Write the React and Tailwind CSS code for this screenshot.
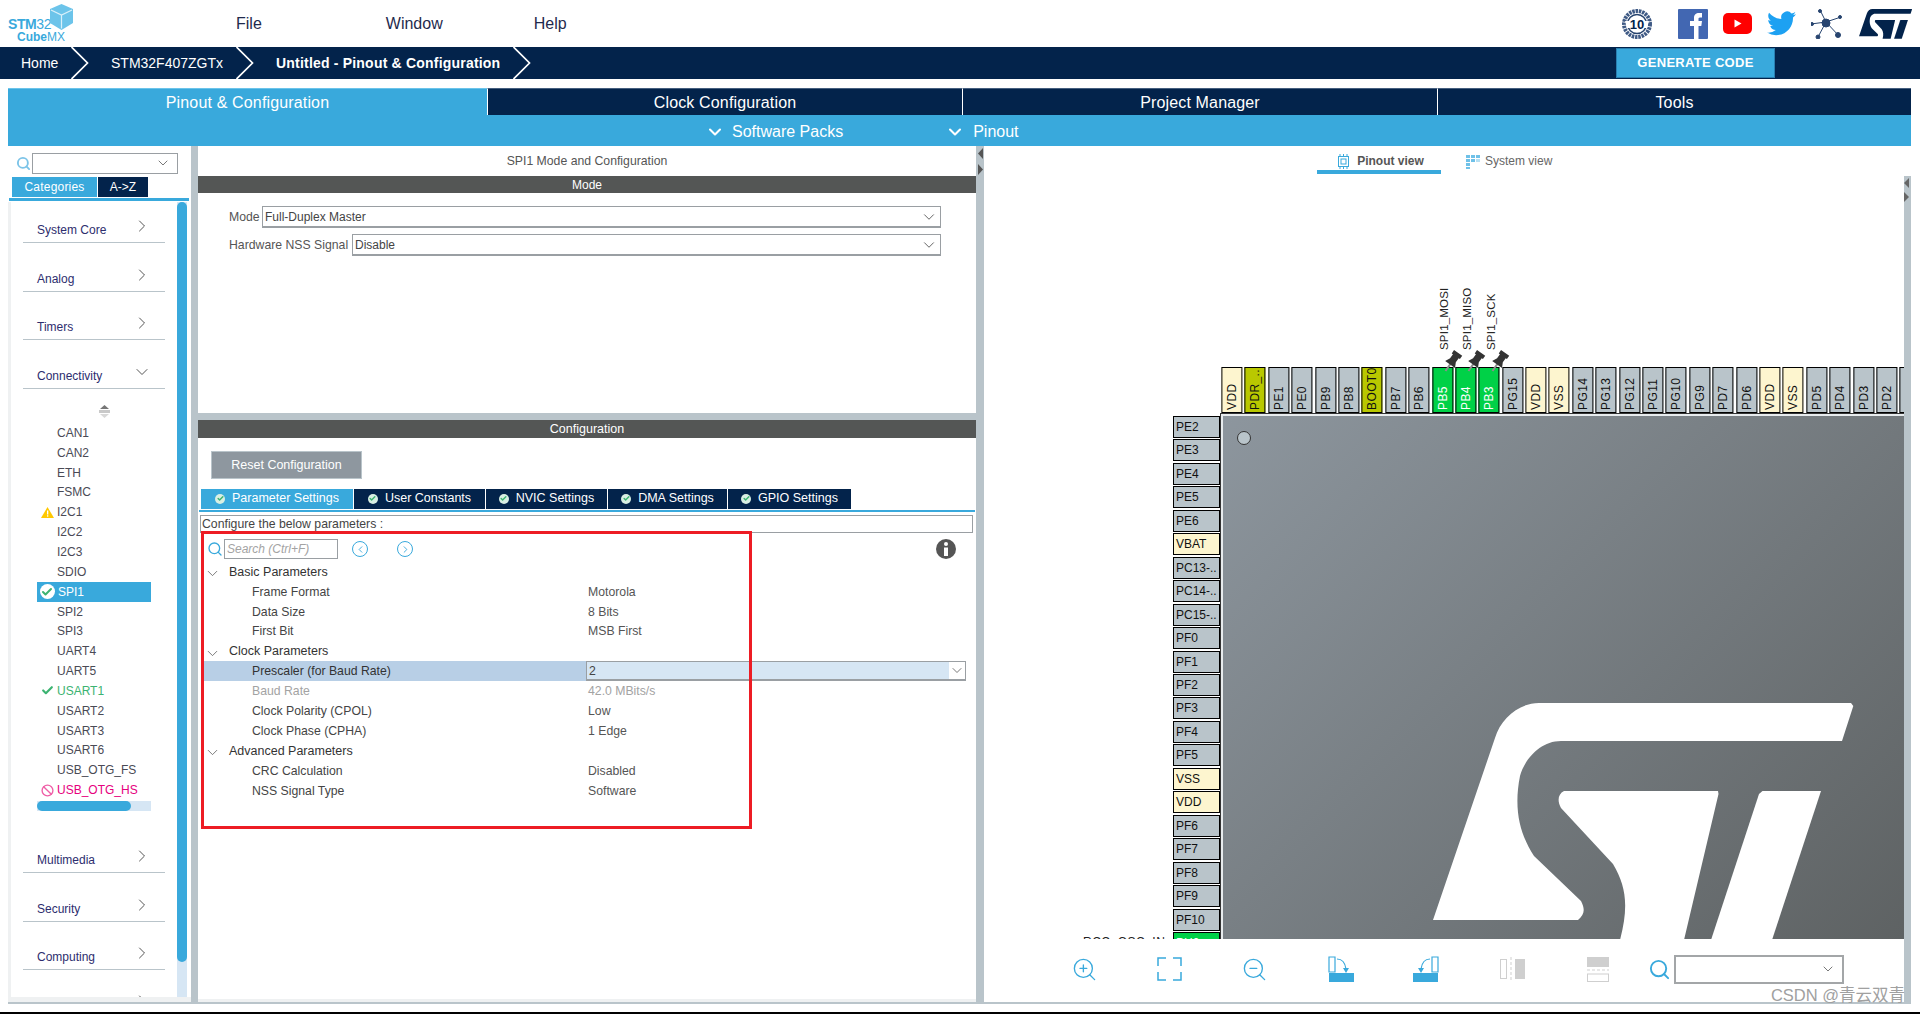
import { ChevronDown, ChevronLeft, ChevronRight, Check, Ban, Search, ZoomIn, ZoomOut } from "lucide-react";

const connectivity = [
    { name: "CAN1" }, { name: "CAN2" }, { name: "ETH" }, { name: "FSMC" },
    { name: "I2C1", state: "warn" }, { name: "I2C2" }, { name: "I2C3" }, { name: "SDIO" },
    { name: "SPI1", state: "selected" }, { name: "SPI2" }, { name: "SPI3" }, { name: "UART4" },
    { name: "UART5" }, { name: "USART1", state: "ok" }, { name: "USART2" }, { name: "USART3" },
    { name: "USART6" }, { name: "USB_OTG_FS" }, { name: "USB_OTG_HS", state: "blocked" },
];

const topPins = [
    ["VDD", "y"], ["PDR_..", "o"], ["PE1", "g"], ["PE0", "g"], ["PB9", "g"], ["PB8", "g"], ["BOOT0", "o"],
    ["PB7", "g"], ["PB6", "g"], ["PB5", "a"], ["PB4", "a"], ["PB3", "a"], ["PG15", "g"], ["VDD", "y"],
    ["VSS", "y"], ["PG14", "g"], ["PG13", "g"], ["PG12", "g"], ["PG11", "g"], ["PG10", "g"], ["PG9", "g"],
    ["PD7", "g"], ["PD6", "g"], ["VDD", "y"], ["VSS", "y"], ["PD5", "g"], ["PD4", "g"], ["PD3", "g"], ["PD2", "g"], ["", "g"],
];

const leftPins = [
    ["PE2", "g"], ["PE3", "g"], ["PE4", "g"], ["PE5", "g"], ["PE6", "g"], ["VBAT", "y"], ["PC13-..", "g"],
    ["PC14-..", "g"], ["PC15-..", "g"], ["PF0", "g"], ["PF1", "g"], ["PF2", "g"], ["PF3", "g"], ["PF4", "g"],
    ["PF5", "g"], ["VSS", "y"], ["VDD", "y"], ["PF6", "g"], ["PF7", "g"], ["PF8", "g"], ["PF9", "g"], ["PF10", "g"], ["PH0", "a"],
];

const pinColors = {
    g: "bg-[#b9c4ca] text-[#111]",
    y: "bg-[#fdf5cf] text-[#111]",
    o: "bg-[#b9c800] text-[#111]",
    a: "bg-[#00d147] text-white",
};

const parameters = [
    { group: "Basic Parameters" },
    { label: "Frame Format", value: "Motorola" },
    { label: "Data Size", value: "8 Bits" },
    { label: "First Bit", value: "MSB First" },
    { group: "Clock Parameters" },
    { label: "Prescaler (for Baud Rate)", value: "2", active: true },
    { label: "Baud Rate", value: "42.0 MBits/s", muted: true },
    { label: "Clock Polarity (CPOL)", value: "Low" },
    { label: "Clock Phase (CPHA)", value: "1 Edge" },
    { group: "Advanced Parameters" },
    { label: "CRC Calculation", value: "Disabled" },
    { label: "NSS Signal Type", value: "Software" },
];

function StLogoPaths() {
    return (
        <>
            <path d="M1538 702L1850 702L1852.3 705L1841 740L1560 740C1538 740 1523 760 1519 775C1512 810 1520 835 1533 855L1580 900C1584 908 1584 913 1577 919L1432 919L1494 737C1500 717 1518 702 1538 702Z" />
            <path d="M1563 790L1717 790L1717.5 793L1683 939L1619 939C1628 905 1625 885 1612 863L1560 807C1556 800 1557 793 1563 790Z" />
            <path d="M1761.5 790L1820 790L1771 939L1710 939L1758 793Z" />
        </>
    );
}

function Crumb({ bold, className, children }) {
    return (
        <div className={`flex h-full items-center justify-between ${className}`}>
            <span className={`text-[14px] text-white whitespace-nowrap ${bold ? "font-bold tracking-[0.2px]" : ""}`}>{children}</span>
            <svg width="18" height="32" viewBox="0 0 18 32" fill="none" className="shrink-0">
                <path d="M0.5 0L16.5 16L0.5 32" stroke="white" strokeWidth="1.7" />
            </svg>
        </div>
    );
}

function Category({ name, open, className }) {
    return (
        <div className={`relative ml-[12px] w-[142px] h-[25px] border-b border-[#b9c4ca] ${className}`}>
            <span className="absolute left-[14px] top-[3px] text-[12px] text-[#2d2d6e]">{name}</span>
            {open
                ? <ChevronDown size={20} strokeWidth={1.2} className="absolute right-[13px] top-[-2px] text-[#555]" />
                : <ChevronRight size={20} strokeWidth={1.2} className="absolute right-[13px] top-[-2px] text-[#555]" />}
        </div>
    );
}

function ConnectivityRow({ name, state }) {
    const selected = state === "selected";
    let color = "text-[#4a4a55]";
    if (selected) color = "text-white";
    if (state === "ok") color = "text-[#3cb371]";
    if (state === "blocked") color = "text-[#e6007e]";
    return (
        <div className={`flex h-[19.85px] w-[114px] items-center ${selected ? "bg-[#39a9dc]" : ""}`}>
            <div className="flex w-[20px] justify-center">
                {state === "warn" && (
                    <svg width="13" height="11" viewBox="0 0 13 11"><path d="M6.5 0L13 11H0Z" fill="#ffc800" /><rect x="6" y="3.5" width="1.3" height="4" fill="#fff" /><rect x="6" y="8.3" width="1.3" height="1.3" fill="#fff" /></svg>
                )}
                {selected && (
                    <span className="flex h-[15px] w-[15px] items-center justify-center rounded-full bg-white">
                        <Check size={12} strokeWidth={4} className="text-[#3cb371]" />
                    </span>
                )}
                {state === "ok" && <Check size={13} strokeWidth={4} className="text-[#3cb371]" />}
                {state === "blocked" && <Ban size={13} strokeWidth={2.5} className="text-[#ef5fa7]" />}
            </div>
            <span className={`text-[12px] leading-none whitespace-nowrap ${color} ${selected ? "pl-[1px]" : ""}`}>{name}</span>
        </div>
    );
}

function LeftPanel() {
    return (
        <div className="flex h-full w-[183px] shrink-0 flex-col">
            <div className="flex h-[31px] items-center pl-[8px] pt-[3px]">
                <Search size={15} strokeWidth={3} className="text-[#7cc4e8]" />
                <div className="ml-[1px] flex h-[21px] w-[146px] items-center justify-end border border-[#9a9fa3] pr-[6px]">
                    <ChevronDown size={16} strokeWidth={1.2} className="text-[#555]" />
                </div>
            </div>
            <div className="flex pl-[4px] h-[20px]">
                <div className="flex w-[85px] items-center justify-center bg-[#39a9dc] text-[12px] tracking-[0.2px] text-white">Categories</div>
                <div className="ml-[1px] flex w-[50px] items-center justify-center bg-[#03234b] text-[12px] text-white">A-&gt;Z</div>
            </div>
            <div className="mt-[1px] ml-[1px] mr-[2px] h-[3px] bg-[#39a9dc]"></div>
            <div className="mt-[1px] flex min-h-0 flex-1 border-l-[3px] border-b-[5px] border-[#eff1f2]">
                <div className="w-[166px] overflow-hidden">
                    <Category name="System Core" className="mt-[16px]" />
                    <Category name="Analog" className="mt-[24px]" />
                    <Category name="Timers" className="mt-[23px]" />
                    <Category name="Connectivity" open className="mt-[24px]" />
                    <div className="mt-[16px] pl-[88px]">
                        <svg width="11" height="13" viewBox="0 0 11 13" className="block">
                            <path d="M5.5 0L10 4H1Z" fill="#777" />
                            <rect x="0" y="5" width="11" height="3" fill="#c9c9c9" />
                            <path d="M1 9H10L5.5 13Z" fill="#d8d8d8" />
                        </svg>
                    </div>
                    <div className="ml-[26px] mt-[5px]">
                        {connectivity.map((item) => <ConnectivityRow key={item.name} {...item} />)}
                        <div className="mt-[1px] h-[10px] w-[114px] bg-[#d6e6f4]">
                            <div className="h-full w-[94px] rounded-full bg-[#39a9dc]"></div>
                        </div>
                    </div>
                    <Category name="Multimedia" className="mt-[37px]" />
                    <Category name="Security" className="mt-[24px]" />
                    <Category name="Computing" className="mt-[23px]" />
                    <Category name="" className="mt-[23px]" />
                </div>
                <div className="h-full w-[10px] bg-[#d6e6f4]">
                    <div className="h-[760px] w-full rounded-full bg-[#39a9dc]"></div>
                </div>
            </div>
        </div>
    );
}

function SelectBox({ value, className }) {
    return (
        <div className={`flex shrink-0 items-center justify-between border border-[#9a9fa3] border-b-2 pl-[2px] pr-[2px] text-[12px] text-[#444] ${className}`}>
            <span>{value}</span>
            <ChevronDown size={18} strokeWidth={1.2} className="text-[#555]" />
        </div>
    );
}

function TabDot() {
    return (
        <span className="mr-[7px] flex h-[10px] w-[10px] items-center justify-center rounded-full bg-[#d9efe3]">
            <Check size={7} strokeWidth={5} className="text-[#3cb371]" />
        </span>
    );
}

function ConfigTab({ active, className, children }) {
    return (
        <div className={`flex h-[20px] items-center justify-center pb-[1px] text-[12.5px] whitespace-nowrap text-white ${active ? "bg-[#39a9dc]" : "bg-[#03234b]"} ${className}`}>
            <TabDot />
            {children}
        </div>
    );
}

function ParameterRows() {
    return (
        <div className="ml-[5px] mt-[3px]">
            {parameters.map((row) => {
                if (row.group) {
                    return (
                        <div key={row.group} className="flex h-[19.9px] items-center text-[12.5px] text-[#333]">
                            <ChevronDown size={17} strokeWidth={1.2} className="ml-[1px] mt-[3px] w-[17px] text-[#666]" />
                            <span className="ml-[8px]">{row.group}</span>
                        </div>
                    );
                }
                return (
                    <div key={row.label} className="flex h-[19.9px] items-center text-[12.25px]">
                        <div className={`flex h-full w-[383px] items-center pl-[49px] ${row.active ? "bg-[#b8cfe6] text-[#333]" : row.muted ? "text-[#a3a3a3]" : "text-[#444]"}`}>{row.label}</div>
                        {row.active ? (
                            <div className="flex h-full w-[380px] border border-[#9a9fa3] border-b-2 bg-[#d6e6f4] pl-[2px] text-[#444]">
                                <span className="flex-1">{row.value}</span>
                                <span className="flex w-[16px] items-center justify-center bg-white">
                                    <ChevronDown size={17} strokeWidth={1.2} className="text-[#555]" />
                                </span>
                            </div>
                        ) : (
                            <span className={`pl-[2px] ${row.muted ? "text-[#a3a3a3]" : "text-[#555]"}`}>{row.value}</span>
                        )}
                    </div>
                );
            })}
        </div>
    );
}

function CenterPanel() {
    return (
        <div className="flex h-full w-[778px] shrink-0 flex-col">
            <div className="h-[267px] shrink-0">
                <div className="flex h-[30px] items-center justify-center text-[12.25px] text-[#555]">SPI1 Mode and Configuration</div>
                <div className="flex h-[17px] items-center justify-center bg-[#545655] text-[12px] text-white">Mode</div>
                <div className="ml-[31px] mt-[13px] flex items-center">
                    <span className="w-[33px] whitespace-nowrap text-[12.25px] text-[#555]">Mode</span>
                    <SelectBox value="Full-Duplex Master" className="h-[22px] w-[679px]" />
                </div>
                <div className="ml-[31px] mt-[6px] flex items-center">
                    <span className="w-[123px] whitespace-nowrap text-[12.25px] text-[#555]">Hardware NSS Signal</span>
                    <SelectBox value="Disable" className="h-[22px] w-[589px]" />
                </div>
            </div>
            <div className="h-[7px] shrink-0 bg-[#b9c4ca]"></div>
            <div className="relative min-h-0 flex-1 border-b-[3px] border-[#eff1f2]">
                <div className="flex h-[18px] items-center justify-center bg-[#545655] text-[12.5px] text-white">Configuration</div>
                <div className="ml-[13px] mt-[13px] flex h-[28px] w-[151px] items-center justify-center border border-[#b9c4ca] bg-[#8e979f] text-[12.5px] text-white">Reset Configuration</div>
                <div className="ml-[3px] mt-[10px] flex gap-[1px]">
                    <ConfigTab active className="w-[152px]">Parameter Settings</ConfigTab>
                    <ConfigTab className="w-[131px]">User Constants</ConfigTab>
                    <ConfigTab className="w-[121px]">NVIC Settings</ConfigTab>
                    <ConfigTab className="w-[119px]">DMA Settings</ConfigTab>
                    <ConfigTab className="w-[123px]">GPIO Settings</ConfigTab>
                </div>
                <div className="ml-[1px] mr-[1px] mt-[1px] h-[2px] bg-[#39a9dc]"></div>
                <div className="ml-[2px] mr-[3px] mt-[3px] flex h-[18px] items-center border border-[#9a9fa3] pl-[1px] text-[12.25px] text-[#444]">Configure the below parameters :</div>
                <div className="ml-[9px] mt-[6px] flex h-[20px] items-center">
                    <Search size={16} strokeWidth={2} className="text-[#39a9dc]" />
                    <div className="ml-[1px] flex h-[20px] w-[114px] items-center border border-[#9a9fa3] pl-[2px] text-[12px] italic text-[#a3a3a3]">Search (Ctrl+F)</div>
                    <span className="ml-[14px] flex h-[16px] w-[16px] items-center justify-center rounded-full border border-[#39a9dc]">
                        <ChevronLeft size={11} strokeWidth={2} className="text-[#39a9dc]" />
                    </span>
                    <span className="ml-[29px] flex h-[16px] w-[16px] items-center justify-center rounded-full border border-[#39a9dc]">
                        <ChevronRight size={11} strokeWidth={2} className="text-[#39a9dc]" />
                    </span>
                    <svg width="20" height="20" viewBox="0 0 20 20" className="ml-auto mr-[20px]">
                        <circle cx="10" cy="10" r="10" fill="#555" />
                        <circle cx="10" cy="5" r="2" fill="#fff" />
                        <rect x="8" y="8.5" width="4" height="8.5" fill="#fff" />
                    </svg>
                </div>
                <ParameterRows />
                {/* red box drawn over the parameter tree */}
                <div className="absolute left-[3px] top-[111px] h-[298px] w-[551px] border-[3px] border-[#ed1c24]"></div>
            </div>
        </div>
    );
}

function Pushpin() {
    return (
        <svg width="22" height="24" viewBox="0 0 22 24" className="block">
            <g transform="translate(1.500 23) rotate(35)">
                <path d="M0 0V-9" stroke="#8c8c8c" strokeWidth="2" />
                <path d="M-6 -8H6L3.500 -13V-18H5V-22H-5V-18H-3.500V-13Z" fill="#333" />
            </g>
        </svg>
    );
}

function ToolIcon({ children }) {
    return <svg width="27" height="26" viewBox="0 0 27 26" fill="none" className="shrink-0">{children}</svg>;
}

function Toolbar() {
    return (
        <div className="flex h-[64px] shrink-0 items-center pb-[2px] pl-[87px]">
            <ZoomIn size={27} strokeWidth={1.2} className="text-[#39a9dc]" />
            <div className="ml-[58px]">
                <ToolIcon><path d="M2 10V2H10M17 2H25V10M25 16V24H17M10 24H2V16" stroke="#39a9dc" strokeWidth="1.5" /></ToolIcon>
            </div>
            <ZoomOut size={27} strokeWidth={1.2} className="ml-[58px] text-[#39a9dc]" />
            <div className="ml-[60px]">
                <ToolIcon>
                    <path d="M1 1H7V16H1ZM9 3C14 3 17 6 18 13" stroke="#39a9dc" strokeWidth="1.2" />
                    <path d="M15 12H21L18 17Z" fill="#39a9dc" />
                    <rect x="1" y="17" width="25" height="9" fill="#39a9dc" />
                </ToolIcon>
            </div>
            <div className="ml-[57px]">
                <ToolIcon>
                    <path d="M26 1H20V16H26ZM18 3C13 3 10 6 9 13" stroke="#39a9dc" strokeWidth="1.2" />
                    <path d="M6 12H12L9 17Z" fill="#39a9dc" />
                    <rect x="1" y="17" width="25" height="9" fill="#39a9dc" />
                </ToolIcon>
            </div>
            <div className="ml-[60px]">
                <ToolIcon>
                    <rect x="1.500" y="3.500" width="6" height="19" stroke="#cfcfcf" />
                    <rect x="16" y="3" width="10" height="20" fill="#cfcfcf" />
                    <path d="M12 1V25" stroke="#cfcfcf" strokeDasharray="3 2" />
                </ToolIcon>
            </div>
            <div className="ml-[59px]">
                <ToolIcon>
                    <rect x="2" y="1" width="22" height="10" fill="#cfcfcf" />
                    <path d="M2 14H24" stroke="#cfcfcf" strokeDasharray="3 2" />
                    <rect x="2.500" y="18" width="21" height="7.500" stroke="#cfcfcf" />
                </ToolIcon>
            </div>
            <Search size={23} strokeWidth={2} className="ml-[36px] text-[#39a9dc]" />
            <div className="ml-[3px] flex h-[29px] w-[170px] items-center justify-end border-2 border-[#a3a6a8] pr-[6px]">
                <ChevronDown size={16} strokeWidth={1.2} className="text-[#555]" />
            </div>
        </div>
    );
}

function PinoutPanel() {
    return (
        <div className="relative flex h-full min-w-0 flex-1 flex-col">
            <div className="flex h-[30px] shrink-0 pl-[333px]">
                <div className="flex h-[28px] w-[124px] items-center justify-center gap-[7px] border-b-4 border-[#39a9dc] pl-[3px] pt-[6px] text-[12px] font-bold text-[#555]">
                    <svg width="13" height="15" viewBox="0 0 13 15" fill="none" stroke="#39a9dc"><rect x="1.500" y="2.500" width="10" height="10" /><rect x="4" y="5" width="5" height="5" /><path d="M3 0V2M6.500 0V2M10 0V2M3 13V15M6.500 13V15M10 13V15" /></svg>
                    Pinout view
                </div>
                <div className="ml-[25px] flex h-[30px] items-center gap-[5px] text-[12px] text-[#666]">
                    <svg width="14" height="15" viewBox="0 0 14 15" fill="#6fc1e8"><rect x="0" y="1" width="4" height="3" /><rect x="5" y="1" width="4" height="3" /><rect x="10" y="1" width="4" height="3" /><rect x="0" y="5" width="4" height="3" /><rect x="5" y="5" width="4" height="3" /><rect x="10" y="5" width="4" height="3" opacity="0.5" /><rect x="0" y="9" width="4" height="3" /><rect x="0" y="13" width="4" height="2" /></svg>
                    System view
                </div>
            </div>
            <div className="flex min-h-0 flex-1">
                <div className="relative h-[763px] min-w-0 flex-1 overflow-hidden">
                    {/* assigned signal labels and pins sit on the free chip canvas */}
                    {[["SPI1_MOSI", 461], ["SPI1_MISO", 484], ["SPI1_SCK", 508]].map(([label, left]) => (
                        <div key={label} className="absolute top-[112px] flex h-[62px] w-[14px] rotate-180 items-center justify-start text-[11.5px] leading-none tracking-[0.2px] whitespace-nowrap text-[#222] [writing-mode:vertical-rl]" style={{ left: left - 7 }}>{label}</div>
                    ))}
                    {[452, 475, 499].map((left) => (
                        <div key={left} className="absolute top-[172px] z-10" style={{ left: left + 8 }}><Pushpin /></div>
                    ))}
                    <div className="ml-[237px] flex gap-[2px] pt-[191px]">
                        {topPins.map(([name, kind], i) => (
                            <div key={i} className={`flex h-[46px] w-[21.4px] shrink-0 rotate-180 items-center justify-start border border-black pt-[2px] text-[12px] leading-none tracking-[0.4px] [writing-mode:vertical-rl] ${pinColors[kind]}`}>{name}</div>
                        ))}
                    </div>
                    <div className="flex">
                        <div className="ml-[189px] mt-[3px] flex w-[47px] shrink-0 flex-col gap-[1.46px]">
                            {leftPins.map(([name, kind], i) => (
                                <div key={i} className={`flex h-[22px] shrink-0 items-center border border-black pl-[2px] text-[12px] leading-none ${pinColors[kind]}`}>{name}</div>
                            ))}
                        </div>
                        <div className="relative h-[526px] flex-1 border-l-[1px] border-t-[1px] border-[#333] bg-[linear-gradient(135deg,#8d969e,#5e6263)] shadow-[inset_2px_2px_0_#e8ecee]">
                            <span className="absolute left-[16px] top-[17px] h-[14px] w-[14px] rounded-full border border-[#333] bg-[#b9c4ca]"></span>
                            <svg viewBox="1220 413 684 526" fill="#fff" className="absolute left-0 top-0 h-[526px] w-[684px]"><StLogoPaths /></svg>
                        </div>
                    </div>
                    <span className="absolute left-[99px] top-[760px] text-[12px] leading-none tracking-[0.5px] whitespace-nowrap text-[#222]">RCC_OSC_IN</span>
                </div>
                <div className="relative h-full w-[7px] shrink-0 bg-[#b9c4ca]">
                    <svg width="6" height="24" viewBox="0 0 6 24" className="absolute left-0 top-[2px]">
                        <path d="M5 0V10L0 5Z" fill="#666" />
                        <path d="M0 14V24L5 19Z" fill="#666" />
                    </svg>
                </div>
            </div>
            <div className="absolute bottom-0 left-0 right-[7px]"><Toolbar /></div>
            <span className="absolute right-[6px] bottom-[-6px] text-[16.5px] text-[#a0a0a0] [font-family:'Liberation_Sans','Noto_Sans_CJK_SC',sans-serif]">CSDN @青云双青</span>
        </div>
    );
}

function TopIcons() {
    return (
        <div className="flex items-center pr-[8px]">
            {/* anniversary seal */}
            <svg width="30" height="30" viewBox="0 0 30 30">
                <circle cx="15" cy="15" r="13" fill="#fff" stroke="#3f5a85" strokeWidth="4" strokeDasharray="2.500 0.800" />
                <circle cx="15" cy="15" r="9.500" fill="#fff" stroke="#27446f" strokeWidth="1.500" />
                <path d="M3 12H27L25 19H5Z" fill="#fff" />
                <text x="15" y="20" textAnchor="middle" fontSize="13" fontWeight="700" fill="#03234b" fontFamily="Liberation Sans">10</text>
            </svg>
            <svg width="30" height="30" viewBox="0 0 30 30" className="ml-[26px]">
                <rect width="30" height="30" rx="1" fill="#4267b2" />
                <path d="M16 30V17H12V12H16V9C16 5.500 18 4 21 4H24V8.500H22C20.500 8.500 20.500 9.300 20.500 10.500V12H24L23.300 17H20.500V30Z" fill="#fff" />
            </svg>
            <svg width="29" height="21" viewBox="0 0 29 21" className="ml-[15px]">
                <rect width="29" height="21" rx="5" fill="#ff0000" />
                <path d="M11.500 6.500L18.500 10.500L11.500 14.500Z" fill="#fff" />
            </svg>
            <svg width="29" height="25" viewBox="0 0 24 20" className="ml-[15px]">
                <path d="M24 2.400c-.9.400-1.800.700-2.800.800 1-.600 1.800-1.600 2.200-2.700-1 .600-2 1-3.100 1.200A4.900 4.900 0 0 0 11.900 6.200C7.800 6 4.200 4 1.700 1 .4 3.200 1 6.100 3.200 7.600c-.8 0-1.600-.2-2.200-.6 0 2.400 1.700 4.400 3.900 4.900-.7.200-1.500.2-2.200.1.600 2 2.400 3.400 4.600 3.400A9.900 9.900 0 0 1 0 17.500 14 14 0 0 0 7.500 19.700c9.100 0 14.300-7.700 14-14.600 1-.7 1.800-1.600 2.500-2.700Z" fill="#1da1f2" />
            </svg>
            <svg width="31" height="30" viewBox="0 0 31 30" className="ml-[15px]" stroke="#27446f" strokeWidth="1" fill="#27446f">
                <path d="M15 13L9 1M15 13L30 8M15 13L0 15M15 13L7 28M15 13L28 27" fill="none" />
                <circle cx="15" cy="14" r="4" />
                <circle cx="9" cy="2" r="1.500" />
                <circle cx="29" cy="8" r="1.500" />
                <circle cx="1" cy="15" r="1.500" />
                <circle cx="7" cy="28" r="2" />
                <circle cx="27" cy="26" r="2.500" />
            </svg>
            <svg viewBox="1432 702 420 238" fill="#03234b" className="ml-[17px] h-[30px] w-[53px]"><StLogoPaths /></svg>
        </div>
    );
}

export default function App() {
    return (
        <div className="flex h-[1014px] w-[1920px] flex-col overflow-hidden bg-white [font-family:'Liberation_Sans',Arial,sans-serif]">
            {/* menu bar */}
            <div className="flex h-[47px] shrink-0 items-center">
                <div className="relative ml-[8px] mt-[4px] h-[40px] w-[64px] shrink-0 self-start">
                    <span className="absolute left-0 top-[13px] text-[14px] font-bold leading-none tracking-[-0.4px] text-[#39a9dc]">STM<span className="font-normal">32</span></span>
                    <span className="absolute left-[9px] top-[27px] text-[12px] font-bold leading-none text-[#39a9dc]">Cube<span className="font-normal">MX</span></span>
                    <svg width="23" height="26" viewBox="0 0 23 26" className="absolute left-[42px] top-0">
                        <path d="M11.500 0L23 5L23 19L11.500 26L0 19V5Z" fill="#6cc4ea" />
                        <path d="M11.500 11L11.500 24.500M1 6L11.500 11L22 6" fill="none" stroke="#d9f0fa" strokeWidth="1.200" />
                    </svg>
                </div>
                <div className="flex flex-1 text-[16px] text-[#1f2a4d]">
                    <span className="ml-[164px]">File</span>
                    <span className="ml-[124px]">Window</span>
                    <span className="ml-[91px]">Help</span>
                </div>
                <TopIcons />
            </div>
            {/* breadcrumb */}
            <div className="flex h-[32px] shrink-0 items-center bg-[#03234b]">
                <Crumb className="w-[89px] pl-[21px]">Home</Crumb>
                <Crumb className="w-[165px] pl-[22px]">STM32F407ZGTx</Crumb>
                <Crumb bold className="w-[277px] pl-[22px]">Untitled - Pinout &amp; Configuration</Crumb>
                <div className="ml-[1085px] flex h-[30px] w-[159px] items-center justify-center border border-[#2a7fb0] bg-[#39a9dc] text-[13px] font-bold tracking-[0.3px] text-white">GENERATE CODE</div>
            </div>
            {/* perspective tabs */}
            <div className="mx-[8px] mt-[9px] w-[1903px] shrink-0 bg-[#39a9dc]">
                <div className="flex h-[27px] text-[16px] tracking-[0.15px] text-white">
                    <div className="flex w-[479px] items-center justify-center border-t border-[#6cc4ea] pt-[1px]">Pinout &amp; Configuration</div>
                    <div className="flex w-[475px] items-center justify-center border-l border-t border-white border-t-[#465f7f] bg-[#03234b] pt-[1px]">Clock Configuration</div>
                    <div className="flex w-[475px] items-center justify-center border-l border-t border-white border-t-[#465f7f] bg-[#03234b] pt-[1px]">Project Manager</div>
                    <div className="flex flex-1 items-center justify-center border-l border-t border-white border-t-[#465f7f] bg-[#03234b] pt-[1px]">Tools</div>
                </div>
                <div className="flex h-[31px] items-center pt-[2px] text-[16px] text-white">
                    <ChevronDown size={20} strokeWidth={2.5} className="ml-[697px]" />
                    <span className="ml-[7px]">Software Packs</span>
                    <ChevronDown size={20} strokeWidth={2.5} className="ml-[102px]" />
                    <span className="ml-[8px]">Pinout</span>
                </div>
            </div>
            {/* workspace */}
            <div className="mx-[8px] flex h-[858px] w-[1903px] shrink-0 border-b-2 border-[#b9c4ca]">
                <LeftPanel />
                <div className="h-full w-[7px] shrink-0 bg-[#b9c4ca]"></div>
                <CenterPanel />
                <div className="relative h-full w-[8px] shrink-0 bg-[#b9c4ca]">
                    <svg width="6" height="27" viewBox="0 0 6 27" className="absolute left-[2px] top-[2px]">
                        <path d="M5 0V11L0 5.500Z" fill="#555" />
                        <path d="M0 16V27L5 21.500Z" fill="#555" />
                    </svg>
                </div>
                <PinoutPanel />
            </div>
            <div className="mt-auto h-[2px] w-full shrink-0 bg-black"></div>
        </div>
    );
}
